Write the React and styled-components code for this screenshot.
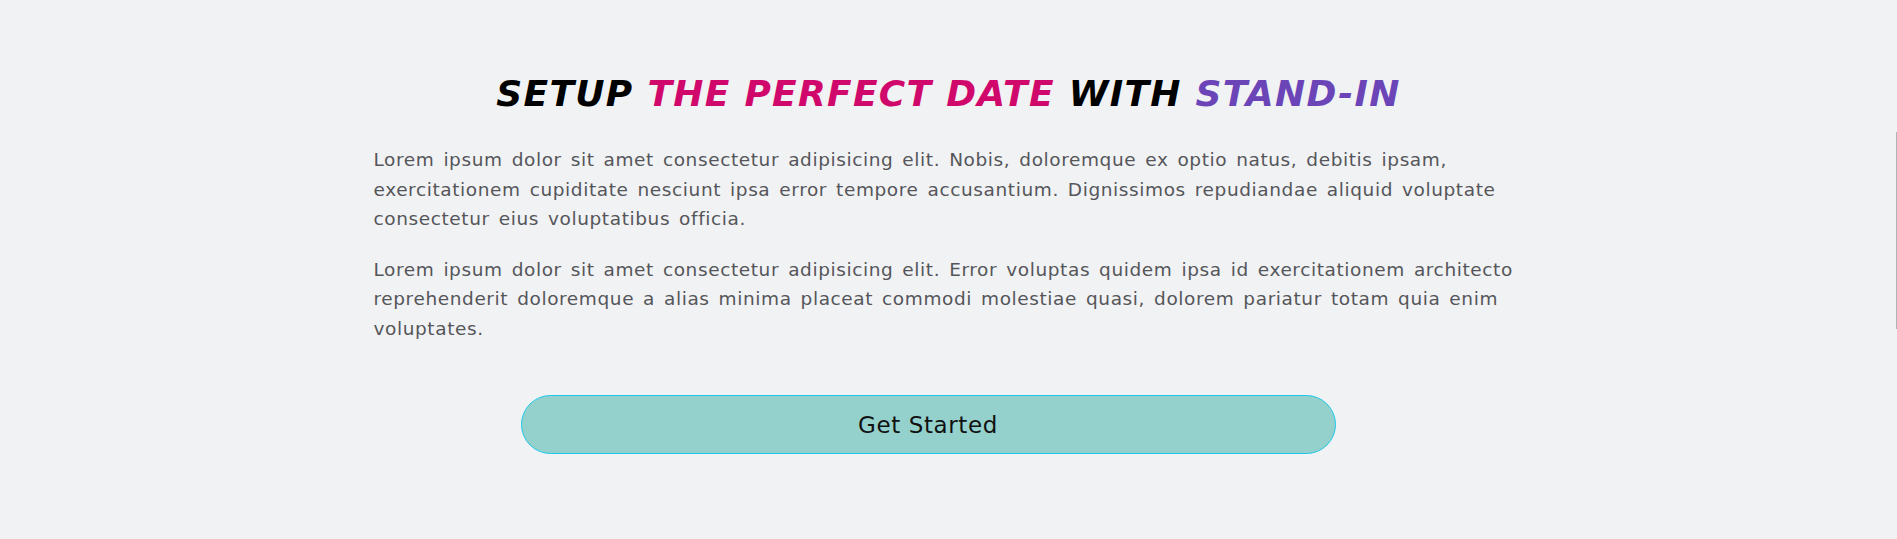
import React from "react";
import styled, { createGlobalStyle } from "styled-components";

const GlobalStyle = createGlobalStyle`
  html, body {
    margin: 0;
    padding: 0;
    background-color: #f1f2f4;
  }
  body {
    font-family: "DejaVu Sans", "Open Sans", sans-serif;
  }
`;

const Section = styled.section`
  position: relative;
  min-height: 539px;
  box-sizing: border-box;
  padding-top: 72px;
  display: flex;
  justify-content: center;

  &:after {
    content: "";
    position: absolute;
    right: 0;
    top: 132px;
    width: 1px;
    height: 197px;
    background-color: #b3b3b3;
  }
`;

const Wrapper = styled.div`
  width: 1150px;
  display: flex;
  flex-direction: column;
`;

const Title = styled.h1`
  margin: 0 0 30px;
  text-align: center;
  font-size: 36px;
  line-height: 43px;
  font-weight: 700;
  font-style: italic;
  letter-spacing: 1.3px;
  color: #000;
`;

const Accent = styled.span`
  color: ${({ tone }) => (tone === "purple" ? "#6b45b7" : "#d1086c")};
`;

const Text = styled.p`
  margin: 0 0 21px;
  font-size: 18.5px;
  line-height: 29.5px;
  color: #55565a;
  letter-spacing: 0.6px;
  word-spacing: 2.5px;
`;

const ButtonRow = styled.div`
  display: flex;
  padding-left: 147px;
  margin-top: 31px;
`;

const Button = styled.button`
  width: 815px;
  height: 59px;
  border: 1px solid #1fc7ea;
  border-radius: 30px;
  background-color: #94d1cc;
  color: #111;
  font-family: "DejaVu Sans", "Open Sans", sans-serif;
  font-size: 23px;
  letter-spacing: 0.6px;
  font-weight: 400;
  cursor: pointer;
  padding: 0;
`;

const App = () => {
  return (
    <>
      <GlobalStyle />
      <Section>
        <Wrapper>
          <Title>
            SETUP <Accent>THE PERFECT DATE</Accent> WITH{" "}
            <Accent tone="purple">STAND-IN</Accent>
          </Title>
          <Text>
            Lorem ipsum dolor sit amet consectetur adipisicing elit. Nobis,
            doloremque ex optio natus, debitis ipsam, exercitationem cupiditate
            nesciunt ipsa error tempore accusantium. Dignissimos repudiandae
            aliquid voluptate consectetur eius voluptatibus officia.
          </Text>
          <Text>
            Lorem ipsum dolor sit amet consectetur adipisicing elit. Error
            voluptas quidem ipsa id exercitationem architecto reprehenderit
            doloremque a alias minima placeat commodi molestiae quasi, dolorem
            pariatur totam quia enim voluptates.
          </Text>
          <ButtonRow>
            <Button>Get Started</Button>
          </ButtonRow>
        </Wrapper>
      </Section>
    </>
  );
};

export default App;
